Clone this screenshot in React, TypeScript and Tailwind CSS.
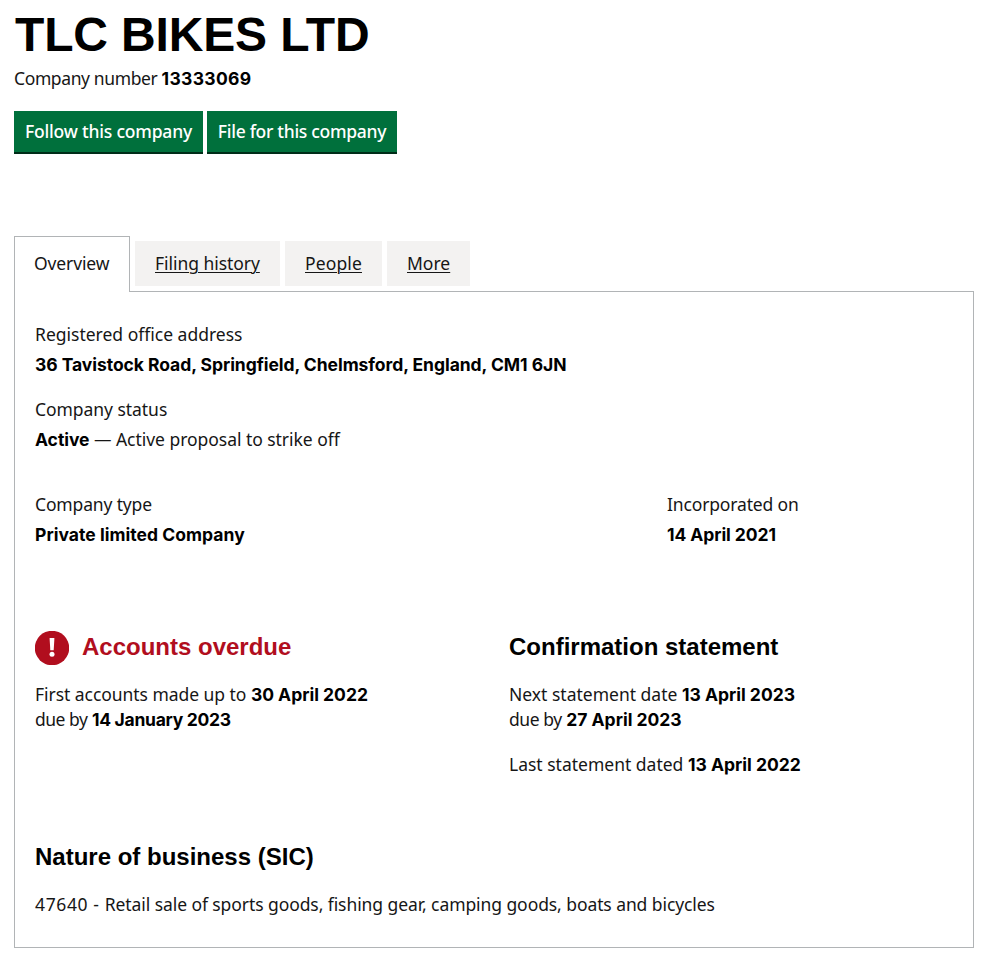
import type { ReactNode } from "react";

function Strong({ children, className = "" }: { children: ReactNode; className?: string }) {
  return (
    <strong className={`font-['Inter',sans-serif] leading-none font-bold text-black ${className}`}>{children}</strong>
  );
}

function Heading({ children, className = "text-black" }: { children: ReactNode; className?: string }) {
  return (
    <h2 className={`font-['Liberation_Sans',Arial,sans-serif] text-2xl leading-[30px] font-bold ${className}`}>
      {children}
    </h2>
  );
}

function Button({ children, className }: { children: ReactNode; className: string }) {
  return (
    <button
      className={`h-[43px] border-b-2 border-[#002d18] bg-[#00703c] text-center font-['Noto_Sans',sans-serif] leading-[25px] whitespace-nowrap text-white ${className}`}
    >
      {children}
    </button>
  );
}

function Tab({ children, className }: { children: ReactNode; className: string }) {
  return (
    <li className={`mt-[5px] mr-[5px] h-[45px] bg-[#f3f2f1] pt-2.5 pl-5 ${className}`}>
      <a href="#" className="underline decoration-1 underline-offset-2">
        {children}
      </a>
    </li>
  );
}

function OverdueIcon() {
  return (
    <svg viewBox="0 0 34 34" className="-mt-px mr-[13px] size-[34px] shrink-0">
      <circle cx="17" cy="17" r="17.2" fill="#b10e1e" />
      <path d="M14.6 7h4.8l-.7 12.2h-3.4z" fill="#fff" />
      <circle cx="17" cy="23.3" r="2.5" fill="#fff" />
    </svg>
  );
}

export default function App() {
  return (
    <main className="h-[964px] w-[983px] bg-white pt-2.5 pl-3.5 font-['Noto_Sans',sans-serif] text-[17.5px] leading-[25px] text-[#161616]">
      <h1 className="pl-px font-['Liberation_Sans',Arial,sans-serif] text-5xl leading-[50px] font-bold tracking-[-0.15px] text-black">
        TLC BIKES LTD
      </h1>
      <p className="mt-1.5 tracking-[-0.38px]">
        Company number <Strong className="tracking-[0.33px]">13333069</Strong>
      </p>

      <div className="mt-5 flex gap-1">
        <Button className="w-[189px] font-medium tracking-[-0.2px]">Follow this company</Button>
        <Button className="w-[190px] font-medium tracking-[-0.3px]">File for this company</Button>
      </div>

      <ul className="mt-[82px] flex">
        <li className="relative z-10 mr-[5px] -mb-px h-14 w-[116px] border border-b-0 border-[#b1b4b6] bg-white pt-3.5 pl-[19px] tracking-[-0.12px]">
          Overview
        </li>
        <Tab className="w-[145px] tracking-[-0.05px]">Filing history</Tab>
        <Tab className="w-[97px] tracking-[0.13px]">People</Tab>
        <Tab className="w-[83px]">More</Tab>
      </ul>

      <section className="w-[960px] border border-[#b1b4b6] pt-[27px] pb-[30px] pl-5">
        <dl className="leading-[30px]">
          <dt>Registered office address</dt>
          <dd>
            <Strong className="tracking-[-0.05px]">36 Tavistock Road, Springfield, Chelmsford, England, CM1 6JN</Strong>
          </dd>
          <dt className="mt-[15px] tracking-[-0.05px]">Company status</dt>
          <dd className="tracking-[-0.04px]">
            <Strong>Active</Strong> — Active proposal to strike off
          </dd>
        </dl>

        <div className="mt-[35px] flex leading-[30px]">
          <dl className="w-[632px]">
            <dt className="tracking-[-0.15px]">Company type</dt>
            <dd>
              <Strong className="tracking-[0.04px]">Private limited Company</Strong>
            </dd>
          </dl>
          <dl>
            <dt className="tracking-[-0.15px]">Incorporated on</dt>
            <dd>
              <Strong className="tracking-[-0.08px]">14 April 2021</Strong>
            </dd>
          </dl>
        </div>

        <div className="mt-[83px] flex">
          <div className="w-[474px]">
            <div className="flex h-[30px]">
              <OverdueIcon />
              <Heading className="text-[#b10e1e]">Accounts overdue</Heading>
            </div>
            <p className="mt-5">
              <span className="tracking-[-0.05px]">First accounts made up to</span> <Strong>30 April 2022</Strong>
              <br />
              <span className="tracking-[-0.5px]">due by</span>{" "}
              <Strong className="tracking-[-0.28px]">14 January 2023</Strong>
            </p>
          </div>
          <div>
            <Heading>Confirmation statement</Heading>
            <p className="mt-5">
              Next statement date <Strong>13 April 2023</Strong>
              <br />
              <span className="tracking-[-0.45px]">due by</span> <Strong>27 April 2023</Strong>
            </p>
            <p className="mt-5">
              Last statement dated <Strong>13 April 2022</Strong>
            </p>
          </div>
        </div>

        <Heading className="mt-[65px] text-black">Nature of business (SIC)</Heading>
        <p className="mt-5">
          <span className="tracking-[0.62px]">47640 - </span>
          <span className="tracking-[-0.08px]">
            Retail sale of sports goods, fishing gear, camping goods, boats and bicycles
          </span>
        </p>
      </section>
    </main>
  );
}
